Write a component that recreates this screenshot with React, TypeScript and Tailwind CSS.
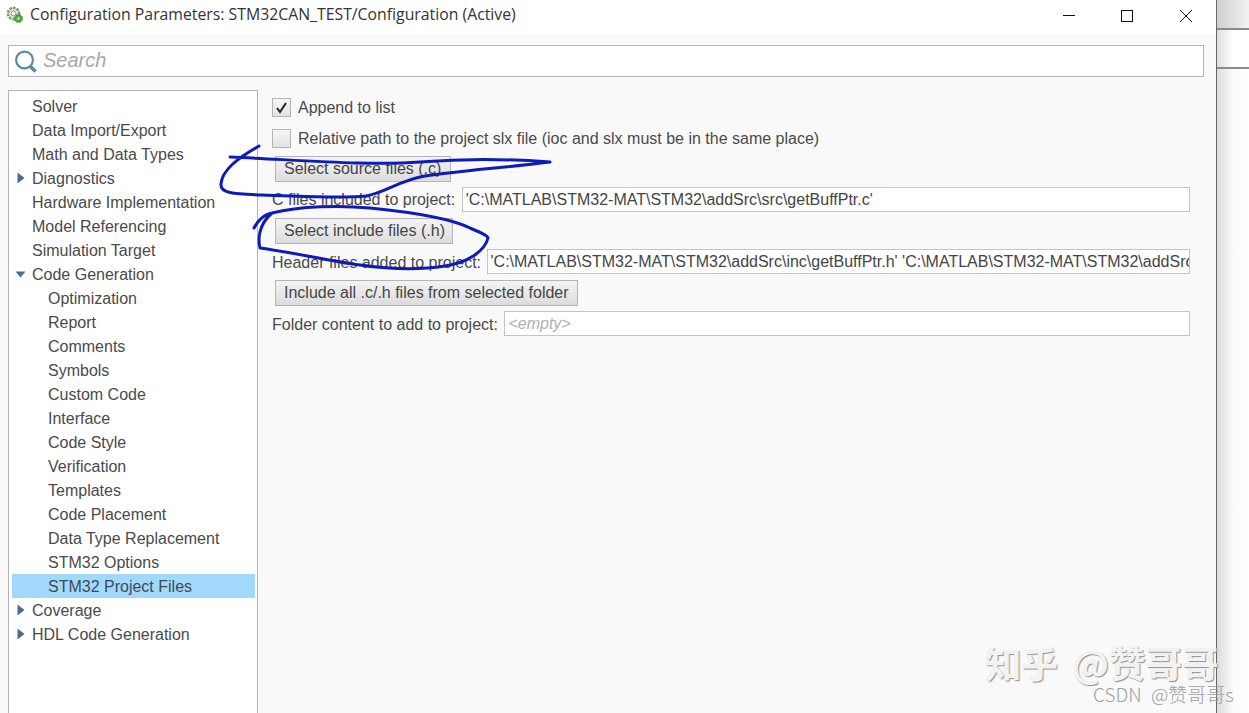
import React from "react";

type Item = { label: string; level: number; arrow?: "right" | "down"; selected?: boolean };

const items: Item[] = [
  { label: "Solver", level: 0 },
  { label: "Data Import/Export", level: 0 },
  { label: "Math and Data Types", level: 0 },
  { label: "Diagnostics", level: 0, arrow: "right" },
  { label: "Hardware Implementation", level: 0 },
  { label: "Model Referencing", level: 0 },
  { label: "Simulation Target", level: 0 },
  { label: "Code Generation", level: 0, arrow: "down" },
  { label: "Optimization", level: 1 },
  { label: "Report", level: 1 },
  { label: "Comments", level: 1 },
  { label: "Symbols", level: 1 },
  { label: "Custom Code", level: 1 },
  { label: "Interface", level: 1 },
  { label: "Code Style", level: 1 },
  { label: "Verification", level: 1 },
  { label: "Templates", level: 1 },
  { label: "Code Placement", level: 1 },
  { label: "Data Type Replacement", level: 1 },
  { label: "STM32 Options", level: 1 },
  { label: "STM32 Project Files", level: 1, selected: true },
  { label: "Coverage", level: 0, arrow: "right" },
  { label: "HDL Code Generation", level: 0, arrow: "right" },
];

function TreeRow({ item }: { item: Item }) {
  return (
    <div className={`relative flex h-6 items-center pt-[2px] ${item.level === 1 ? "pl-9" : "pl-5"} ${item.selected ? "bg-[#a3d8fd] text-[#3c4a55]" : ""}`}>
      {item.arrow === "right" && (
        <svg className="absolute left-[5px] top-[6px]" width="8" height="12" viewBox="0 0 8 12">
          <path d="M0.5 0.5 L7.5 6 L0.5 11.5 Z" fill="#4f6c86" />
        </svg>
      )}
      {item.arrow === "down" && (
        <svg className="absolute left-[3px] top-[9px]" width="11" height="7" viewBox="0 0 11 7">
          <path d="M0.5 0.5 L10.5 0.5 L5.5 6.5 Z" fill="#4f6c86" />
        </svg>
      )}
      <span>{item.label}</span>
    </div>
  );
}

function Btn({ children, mt, w }: { children: React.ReactNode; mt: string; w: string }) {
  return (
    <div className={`${mt} flex`}>
      <div className={`ml-[3px] flex h-[26px] items-center whitespace-nowrap border border-[#b4b4b4] bg-gradient-to-b from-[#f4f4f4] to-[#dcdcdc] px-2 text-[#444] ${w}`}>
        {children}
      </div>
    </div>
  );
}

function Field({ label, value, mt, gap, labelPad, placeholder }: { label: string; value: string; mt: string; gap: string; labelPad: string; placeholder?: boolean }) {
  return (
    <div className={`${mt} flex h-[25px] items-center ${gap}`}>
      <span className={`whitespace-nowrap ${labelPad}`}>{label}</span>
      <div className={`flex h-[25px] min-w-0 flex-1 items-center overflow-hidden whitespace-nowrap border border-[#c4c4c4] bg-white px-[3px] ${placeholder ? "italic text-[#b0b0b0]" : "text-[#444]"}`}>
        {value}
      </div>
    </div>
  );
}

export default function App() {
  return (
    <div className="relative flex h-[713px] w-[1249px] overflow-hidden bg-white font-['Liberation_Sans',Arial,sans-serif] text-base text-[#4a4a4a]">
      {/* main window */}
      <div className="flex w-[1216px] shrink-0 flex-col bg-[#f9f9f9]">
        {/* title bar */}
        <div className="flex h-[34px] shrink-0 items-center justify-between bg-white pl-[6px]">
          <div className="flex items-center gap-[6px] pb-1">
            <svg width="18" height="18" viewBox="0 0 18 18">
              <circle cx="7.5" cy="7.5" r="5.6" fill="#e3ebdc" stroke="#7f9c74" strokeWidth="2.6" strokeDasharray="2.6 1" />
              <circle cx="7.5" cy="7.5" r="2.4" fill="#fff" stroke="#7f9c74" strokeWidth="1" />
              <circle cx="12.5" cy="12.5" r="3.6" fill="#5dab3c" stroke="#3f8f2b" strokeWidth="1.6" strokeDasharray="2 0.8" />
              <circle cx="12.5" cy="12.5" r="1.2" fill="#cfe8b8" />
            </svg>
            <span className="whitespace-nowrap font-['Open_Sans',sans-serif] text-[15.8px] text-[#333]">
              Configuration Parameters: STM32CAN_TEST/Configuration (Active)
            </span>
          </div>
          <div className="flex items-center pb-[3px]">
            <svg className="mr-[46px]" width="12" height="12" viewBox="0 0 12 12">
              <path d="M0 5.5 H12" stroke="#111" strokeWidth="1" />
            </svg>
            <svg className="mr-[47px]" width="12" height="12" viewBox="0 0 12 12">
              <rect x="0.5" y="0.5" width="11" height="11" fill="none" stroke="#111" strokeWidth="1" />
            </svg>
            <svg className="mr-6" width="12" height="12" viewBox="0 0 12 12">
              <path d="M0 0 L12 12 M12 0 L0 12" stroke="#111" strokeWidth="1" />
            </svg>
          </div>
        </div>

        {/* search */}
        <div className="ml-2 mr-3 mt-[11px] flex h-8 shrink-0 items-center border border-[#b4b4b4] bg-white pl-[5px]">
          <svg width="24" height="26" viewBox="0 0 24 26">
            <circle cx="10.5" cy="12" r="8.4" fill="none" stroke="#5d87a8" strokeWidth="2.2" />
            <path d="M16.5 18.5 L21.5 23.5" stroke="#5d87a8" strokeWidth="3.4" />
          </svg>
          <span className="mb-[2px] ml-[5px] text-xl italic text-[#a8a8a8]">Search</span>
        </div>

        {/* body */}
        <div className="mt-[13px] flex min-h-0 flex-1">
          <div className="ml-2 w-[250px] shrink-0 border border-b-0 border-[#b4b4b4] bg-white pl-[3px] pr-[2px] pt-[3px]">
            {items.map((it) => (
              <TreeRow key={it.label} item={it} />
            ))}
          </div>

          <div className="ml-[14px] min-w-0 flex-1 pr-[26px] pt-[7px]">
            <div className="flex h-5 items-center gap-[7px]">
              <span className="flex size-[19px] items-center justify-center border border-[#b4b4b4] bg-gradient-to-b from-[#f6f6f6] to-[#e2e2e2]">
                <svg width="13" height="13" viewBox="0 0 13 13">
                  <path d="M2 7 L5 11 L11 2" fill="none" stroke="#222" strokeWidth="2" />
                </svg>
              </span>
              <span className="pt-[2px]">Append to list</span>
            </div>
            <div className="mt-[11px] flex h-5 items-center gap-[7px]">
              <span className="size-[19px] border border-[#b4b4b4] bg-gradient-to-b from-[#f6f6f6] to-[#e2e2e2]" />
              <span className="whitespace-nowrap pt-[2px]">Relative path to the project slx file (ioc and slx must be in the same place)</span>
            </div>
            <Btn mt="mt-2" w="w-[176px]">Select source files (.c)</Btn>
            <Field mt="mt-[5px]" gap="gap-[6.5px]" labelPad="pt-0" label="C files included to project:" value="'C:\MATLAB\STM32-MAT\STM32\addSrc\src\getBuffPtr.c'" />
            <Btn mt="mt-[6px]" w="w-[178px]">Select include files (.h)</Btn>
            <Field mt="mt-[5px]" gap="gap-[5.5px]" labelPad="pt-[2px]" label="Header files added to project:" value="'C:\MATLAB\STM32-MAT\STM32\addSrc\inc\getBuffPtr.h' 'C:\MATLAB\STM32-MAT\STM32\addSrc\inc\other.h'" />
            <Btn mt="mt-[6px]" w="w-[303px]">Include all .c/.h files from selected folder</Btn>
            <Field mt="mt-[5px]" gap="gap-[6.5px]" labelPad="pt-[2px]" label="Folder content to add to project:" value="<empty>" placeholder />
          </div>
        </div>
      </div>

      {/* window behind */}
      <div className="flex min-w-0 flex-1 flex-col border-l border-[#666]">
        <div className="h-[28px] bg-gradient-to-r from-[#cfcfcf] to-[#f2f2f2]" />
        <div className="h-[2px] bg-[#8a8a8a]" />
        <div className="h-[37px] bg-gradient-to-r from-[#dcdcdc] via-white to-white" />
        <div className="h-[2px] bg-[#8a8a8a]" />
        <div className="flex-1 bg-gradient-to-r from-[#dcdcdc] via-[#fbfbfb] to-white" />
      </div>

      {/* pen annotations */}
      <svg className="pointer-events-none absolute left-0 top-0" width="1249" height="713" viewBox="0 0 1249 713" fill="none">
        <path
          d="M259 146 C238 158 222 170 221 184 C220 193 232 194 262 195 C300 196 340 199 366 196 C385 193 400 180 425 176 C460 171 500 168 550 162 C510 159 470 158 420 162 C370 166 300 160 230 157"
          stroke="#0d1cb8"
          strokeWidth="3"
          strokeLinecap="round"
          strokeLinejoin="round"
        />
        <path
          d="M254 228 C258 220 265 214 272 213 C300 206 340 205 370 208 C410 212 450 218 470 228 C482 233 488 236 488 238 C485 250 470 262 445 266 C420 270 395 270 360 265 C330 261 290 252 260 248 C258 240 258 225 272 213"
          stroke="#0d1cb8"
          strokeWidth="3"
          strokeLinecap="round"
          strokeLinejoin="round"
        />
      </svg>

      {/* watermarks */}
      <div className="pointer-events-none absolute left-[985px] top-[640px] whitespace-nowrap font-['Noto_Sans_CJK_SC',sans-serif] text-[36.5px] font-bold leading-[46px] text-[#f2f2f2] [word-spacing:6px] [text-shadow:1px_1px_1px_#8f8f8f]">
        知乎 @赞哥哥
      </div>
      <div className="pointer-events-none absolute left-[1093px] top-[682px] whitespace-nowrap font-['Noto_Sans_CJK_SC',sans-serif] text-[19px] font-light leading-[24px] text-[#a0a0a0] [word-spacing:5px]">
        CSDN @赞哥哥s
      </div>
    </div>
  );
}
